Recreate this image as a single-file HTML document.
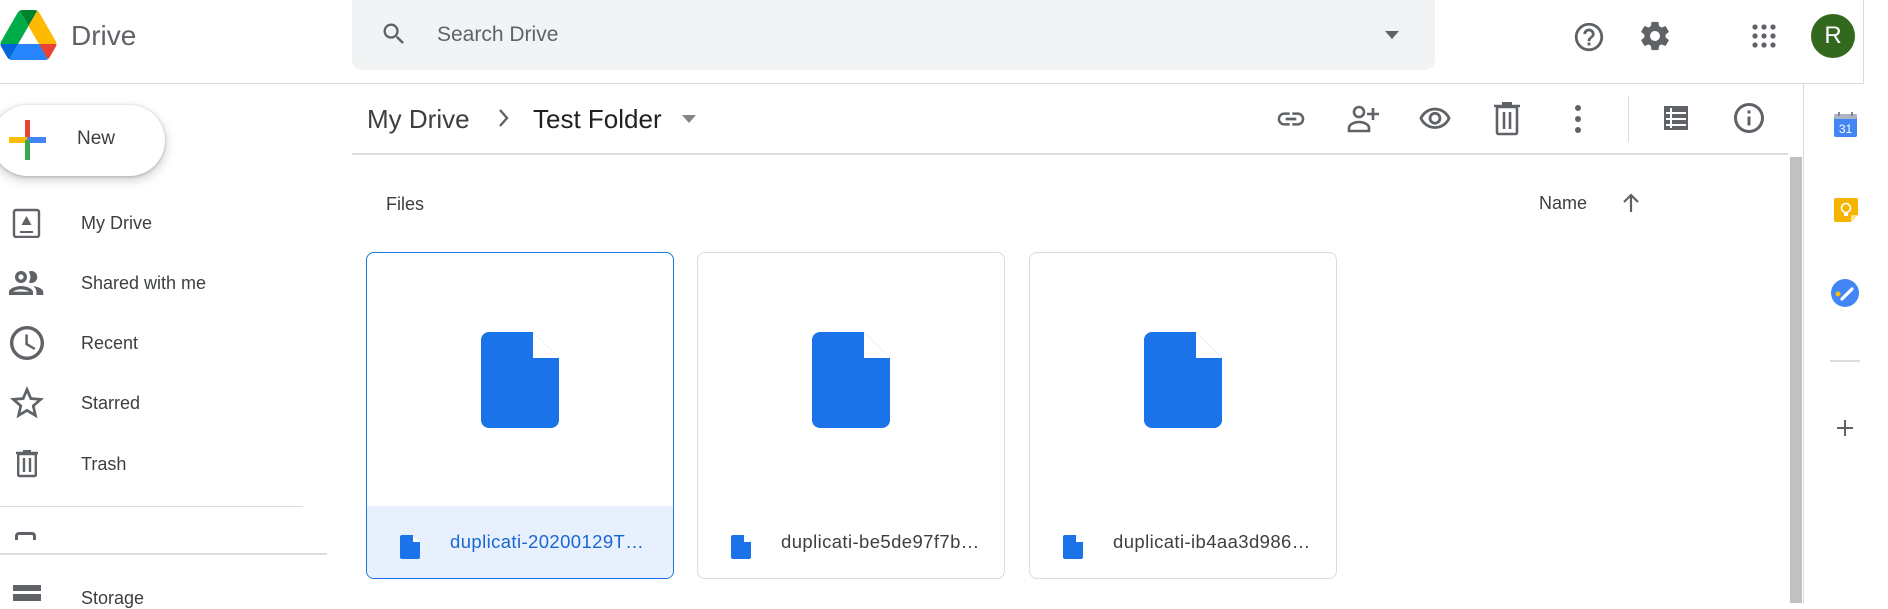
<!DOCTYPE html>
<html><head><meta charset="utf-8"><style>
*{margin:0;padding:0;box-sizing:border-box}
body{width:1888px;height:603px;overflow:hidden;background:#fff;font-family:"Liberation Sans",Arial,sans-serif;color:#3c4043;position:relative}
.a{position:absolute}
.nav{position:absolute;left:0;width:300px;height:40px;display:flex;align-items:center}
.nav svg{position:absolute;left:12px}
.nav span{position:absolute;left:81px;font-size:18px;color:#3c4043}
.card{position:absolute;top:252px;width:308px;height:327px;border:1px solid #dadce0;border-radius:8px;overflow:hidden;background:#fff}
.card .big{position:absolute;left:50%;top:79px;margin-left:-39px}
.card .lab{position:absolute;left:0;right:0;bottom:0;height:72px}
.card .lab svg{position:absolute;left:33px;top:29px}
.card .lab span{position:absolute;left:83px;top:25px;font-size:18.5px;white-space:nowrap;color:#3c4043;letter-spacing:0.4px}
.ic{position:absolute}
</style></head><body>
<!-- header -->
<svg class="a" style="left:0;top:10px" width="57" height="50" viewBox="0 0 87.3 78"><path d="M6.6 66.85l3.85 6.65c.8 1.4 1.95 2.5 3.3 3.3L27.5 53H0c0 1.550.4 3.1 1.2 4.5z" fill="#0066da"/><path d="M43.65 25L29.9 1.2c-1.35.8-2.5 1.9-3.3 3.3L1.2 48.5C.4 49.9 0 51.45 0 53h27.5z" fill="#00ac47"/><path d="M73.55 76.8c1.35-.8 2.5-1.9 3.3-3.3l1.6-2.750 7.65-13.25c.8-1.4 1.2-2.95 1.2-4.5H59.8l5.85 11.5z" fill="#ea4335"/><path d="M43.65 25L57.4 1.2C56.05.4 54.5 0 52.9 0H34.4c-1.6 0-3.150.45-4.5 1.2z" fill="#00832d"/><path d="M59.8 53H27.5L13.75 76.8c1.35.8 2.9 1.2 4.5 1.2h50.8c1.6 0 3.15-.45 4.5-1.2z" fill="#2684fc"/><path d="M73.4 26.5L60.7 4.5c-.8-1.4-1.95-2.5-3.3-3.3L43.65 25 59.8 53h27.45c0-1.55-.4-3.1-1.2-4.5z" fill="#ffba00"/></svg>
<div class="a" style="left:71px;top:20px;font-size:28px;color:#5f6368">Drive</div>
<div class="a" style="left:352px;top:0;width:1083px;height:70px;background:#f1f3f4;border-radius:0 0 10px 10px"></div>
<svg class="a" style="left:380px;top:20px" width="28" height="28" viewBox="0 0 24 24"><path fill="#5f6368" d="M15.5 14h-.79l-.28-.27A6.47 6.47 0 0016 9.5 6.5 6.5 0 109.5 16c1.61 0 3.09-.59 4.230-1.57l.27.28v.79l5 4.99L20.49 19l-4.99-5zm-6 0C7.01 14 5 11.99 5 9.5S7.01 5 9.5 5 14 7.01 14 9.5 11.99 14 9.5 14z"/></svg>
<div class="a" style="left:437px;top:23px;font-size:21px;color:#5f6368">Search Drive</div>
<svg class="a" style="left:1384px;top:30px" width="16" height="10"><path d="M1 1h14L8 9z" fill="#5f6368"/></svg>
<svg class="a" style="left:1572px;top:20px" width="34" height="34" viewBox="0 0 24 24"><path fill="#5f6368" d="M11 18h2v-2h-2v2zm1-16C6.48 2 2 6.48 2 12s4.48 10 10 10 10-4.48 10-10S17.52 2 12 2zm0 18c-4.41 0-8-3.59-8-8s3.59-8 8-8 8 3.59 8 8-3.59 8-8 8zm0-14c-2.21 0-4 1.79-4 4h2c0-1.1.9-2 2-2s2 .9 2 2c0 2-3 1.75-3 5h2c0-2.25 3-2.5 3-5 0-2.21-1.79-4-4-4z"/></svg>
<svg class="a" style="left:1638px;top:19px" width="34" height="34" viewBox="0 0 24 24"><path fill="#5f6368" d="M19.43 12.98c.04-.32.07-.64.07-.98s-.03-.66-.07-.98l2.11-1.65c.19-.15.24-.42.12-.64l-2-3.46c-.12-.22-.39-.3-.61-.22l-2.49 1c-.52-.4-1.08-.73-1.69-.98l-.38-2.65A.49.49 0 0014 2h-4c-.25 0-.46.18-.49.42l-.38 2.65c-.61.25-1.17.59-1.69.98l-2.49-1a.5.5 0 00-.61.22l-2 3.46c-.13.22-.07.49.12.64l2.11 1.65c-.04.32-.07.65-.07.98s.03.66.07.98l-2.11 1.65c-.19.15-.24.42-.12.64l2 3.46c.12.22.39.3.61.22l2.49-1c.52.4 1.08.73 1.69.98l.38 2.65c.03.24.24.42.49.42h4c.25 0 .46-.18.49-.42l.38-2.65c.61-.25 1.17-.59 1.69-.98l2.49 1c.23.09.49 0 .61-.22l2-3.46c.12-.22.07-.49-.12-.64l-2.11-1.65zM12 15.5c-1.93 0-3.5-1.57-3.5-3.5s1.57-3.5 3.5-3.5 3.5 1.57 3.5 3.5-1.57 3.5-3.5 3.5z"/></svg>
<svg class="a" style="left:1750px;top:22px" width="28" height="28" viewBox="0 0 28 28" fill="#5f6368"><circle cx="5" cy="5" r="2.6"/><circle cx="14" cy="5" r="2.6"/><circle cx="23" cy="5" r="2.6"/><circle cx="5" cy="14" r="2.6"/><circle cx="14" cy="14" r="2.6"/><circle cx="23" cy="14" r="2.6"/><circle cx="5" cy="23" r="2.6"/><circle cx="14" cy="23" r="2.6"/><circle cx="23" cy="23" r="2.6"/></svg>
<div class="a" style="left:1811px;top:14px;width:44px;height:44px;border-radius:50%;background:#33691e;color:#fff;font-size:24px;text-align:center;line-height:44px">R</div>
<div class="a" style="left:0;top:83px;width:1863px;height:1px;background:#dadce0"></div>
<div class="a" style="left:1863px;top:0;width:1px;height:84px;background:#dadce0"></div>
<!-- side panel -->
<div class="a" style="left:1803px;top:84px;width:1px;height:519px;background:#dadce0"></div>
<svg class="a" style="left:1833px;top:112px" width="25" height="26" viewBox="0 0 25 26"><rect x="1" y="2" width="23" height="23" rx="2" fill="#4285f4"/><rect x="1" y="2" width="23" height="5" rx="1.5" fill="#aab4c3"/><rect x="5" y="0" width="2" height="4" fill="#888"/><rect x="18" y="0" width="2" height="4" fill="#888"/><text x="12.5" y="21" font-size="12" fill="#fff" text-anchor="middle" font-family="Liberation Sans">31</text></svg>
<svg class="a" style="left:1834px;top:198px" width="24" height="24" viewBox="0 0 24 24"><path d="M2 0h20a2 2 0 012 2v15l-7 7H2a2 2 0 01-2-2V2a2 2 0 012-2z" fill="#f4b400"/><path d="M17 24v-5a2 2 0 012-2h5z" fill="#fde293"/><circle cx="12" cy="10" r="4.5" fill="none" stroke="#fff" stroke-width="1.6"/><rect x="10" y="14" width="4" height="4" fill="#fff"/></svg>
<svg class="a" style="left:1831px;top:279px" width="28" height="28" viewBox="0 0 28 28"><circle cx="14" cy="14" r="14" fill="#4285f4"/><circle cx="7" cy="15" r="2.5" fill="#fbbc04"/><path d="M11 20l10-10" stroke="#fff" stroke-width="3.2" stroke-linecap="round"/></svg>
<div class="a" style="left:1830px;top:360px;width:30px;height:2px;background:#dadce0"></div>
<svg class="a" style="left:1836px;top:419px" width="18" height="18"><path d="M9 1v16M1 9h16" stroke="#5f6368" stroke-width="2"/></svg>
<!-- New button -->
<div class="a" style="left:-8px;top:105px;width:173px;height:71px;border-radius:36px;background:#fff;box-shadow:0 1px 3px rgba(60,64,67,.35),0 4px 8px 3px rgba(60,64,67,.15)"></div>
<svg class="a" style="left:9px;top:120px" width="37" height="40" viewBox="0 0 37 40"><rect x="16" y="0" width="5" height="20" fill="#ea4335"/><rect x="0" y="17" width="18" height="6" fill="#fbbc04"/><rect x="18" y="17" width="19" height="6" fill="#4285f4"/><rect x="16" y="20" width="5" height="20" fill="#34a853"/></svg>
<div class="a" style="left:77px;top:128px;font-size:19px;color:#3c4043">New</div>
<!-- nav -->
<div class="nav" style="top:203px"><svg width="30" height="30" viewBox="0 0 30 30"><rect x="2" y="2" width="25" height="27" rx="2" fill="none" stroke="#5f6368" stroke-width="2.4"/><path d="M8 24h13" stroke="#5f6368" stroke-width="2"/><path d="M14.5 8l5 9h-10z" fill="#5f6368"/></svg><span>My Drive</span></div>
<div class="nav" style="top:263px"><svg width="36" height="36" viewBox="2 3 21 18" style="left:9px"><path fill="#5f6368" d="M9 13.75c-2.34 0-7 1.17-7 3.5V19h14v-1.75c0-2.33-4.66-3.5-7-3.5zM4.34 17c.84-.58 2.870-1.25 4.660-1.25s3.82.67 4.66 1.25H4.34zM9 12c1.93 0 3.5-1.57 3.5-3.5S10.93 5 9 5 5.5 6.57 5.5 8.5 7.07 12 9 12zm0-5c.83 0 1.5.67 1.5 1.5S9.83 10 9 10s-1.5-.67-1.5-1.5S8.17 7 9 7zm7.04 6.81c1.16.84 1.96 1.96 1.96 3.44V19h4v-1.75c0-2.02-3.5-3.17-5.96-3.44zM15 12c1.93 0 3.5-1.57 3.5-3.5S16.93 5 15 5c-.54 0-1.04.13-1.5.35.63.89 1 1.98 1 3.15s-.37 2.26-1 3.15c.46.22.96.35 1.5.35z"/></svg><span>Shared with me</span></div>
<div class="nav" style="top:323px"><svg width="34" height="34" viewBox="2 2 20 20" style="left:10px"><path fill="#5f6368" d="M11.99 2C6.47 2 2 6.48 2 12s4.47 10 9.99 10C17.52 22 22 17.52 22 12S17.52 2 11.99 2zM12 20c-4.42 0-8-3.58-8-8s3.58-8 8-8 8 3.58 8 8-3.58 8-8 8zm.5-13H11v6l5.25 3.15.75-1.23-4.5-2.67z"/></svg><span>Recent</span></div>
<div class="nav" style="top:383px"><svg width="34" height="34" viewBox="2 2 20 20" style="left:10px"><path fill="#5f6368" d="M22 9.24l-7.19-.62L12 2 9.19 8.63 2 9.24l5.46 4.73L5.82 21 12 17.27 18.18 21l-1.63-7.03L22 9.24zM12 15.4l-3.76 2.27 1-4.28-3.32-2.88 4.38-.38L12 6.1l1.71 4.04 4.38.38-3.32 2.88 1 4.28L12 15.4z"/></svg><span>Starred</span></div>
<div class="nav" style="top:444px"><svg width="30" height="30" viewBox="0 0 30 30"><path d="M4 4h22" stroke="#5f6368" stroke-width="2.4"/><rect x="11" y="1" width="8" height="3" fill="#5f6368"/><rect x="6.2" y="5" width="17.6" height="22" rx="1" fill="none" stroke="#5f6368" stroke-width="2.4"/><path d="M12 9v14M18 9v14" stroke="#5f6368" stroke-width="2.4"/></svg><span>Trash</span></div>
<div class="a" style="left:0;top:506px;width:303px;height:1px;background:#dadce0"></div>
<div class="a" style="left:15px;top:532px;width:21px;height:8px;border:3px solid #5f6368;border-bottom:none;border-radius:4px 4px 0 0"></div>
<div class="a" style="left:0;top:553px;width:327px;height:2px;background:#dadce0"></div>
<div class="a" style="left:13px;top:585px;width:28px;height:6px;background:#5f6368"></div>
<div class="a" style="left:13px;top:594px;width:28px;height:7px;background:#5f6368"></div>
<div class="a" style="left:81px;top:588px;font-size:18px;color:#3c4043">Storage</div>
<!-- breadcrumb -->
<div class="a" style="left:367px;top:104px;font-size:26px;color:#3c4043">My Drive</div>
<svg class="a" style="left:497px;top:108px" width="14" height="20"><path d="M3 2l7 8-7 8" stroke="#5f6368" stroke-width="2.4" fill="none"/></svg>
<div class="a" style="left:533px;top:104px;font-size:26px;color:#202124">Test Folder</div>
<svg class="a" style="left:681px;top:114px" width="16" height="10"><path d="M1 1h14L8 9z" fill="#80868b"/></svg>
<div class="a" style="left:352px;top:153px;width:1436px;height:2px;background:#dadce0"></div>
<!-- toolbar -->
<svg class="ic" style="left:1275px;top:103px" width="32" height="32" viewBox="0 0 24 24"><path fill="#5f6368" d="M3.9 12c0-1.71 1.39-3.1 3.1-3.1h4V7H7c-2.76 0-5 2.24-5 5s2.24 5 5 5h4v-1.9H7c-1.71 0-3.1-1.39-3.1-3.1zM8 13h8v-2H8v2zm9-6h-4v1.9h4c1.71 0 3.1 1.39 3.1 3.1s-1.39 3.1-3.1 3.1h-4V17h4c2.76 0 5-2.24 5-5s-2.24-5-5-5z"/></svg>
<svg class="ic" style="left:1346px;top:102px" width="34" height="34" viewBox="0 0 34 34"><circle cx="13" cy="10" r="5" fill="none" stroke="#5f6368" stroke-width="2.6"/><path d="M3 29v-3c0-4 6-6 10-6s10 2 10 6v3z" fill="none" stroke="#5f6368" stroke-width="2.6"/><path d="M27 6v12M21 12h12" stroke="#5f6368" stroke-width="2.6"/></svg>
<svg class="ic" style="left:1418px;top:102px" width="34" height="34" viewBox="0 0 24 24"><path fill="#5f6368" d="M12 6a9.77 9.77 0 018.82 5.5A9.77 9.77 0 0112 17a9.77 9.77 0 01-8.82-5.5A9.77 9.77 0 0112 6m0-2C7 4 2.73 7.11 1 11.5 2.73 15.89 7 19 12 19s9.27-3.11 11-7.5C21.27 7.11 17 4 12 4zm0 5a2.5 2.5 0 010 5 2.5 2.5 0 010-5m0-2c-2.48 0-4.5 2.02-4.5 4.5S9.52 16 12 16s4.5-2.02 4.5-4.5S14.48 7 12 7z"/></svg>
<svg class="ic" style="left:1493px;top:102px" width="28" height="34" viewBox="0 0 28 34"><path d="M1 4h26" stroke="#5f6368" stroke-width="2.6"/><rect x="9" y="0" width="10" height="4" fill="#5f6368"/><rect x="4" y="5" width="20" height="27" rx="1.5" fill="none" stroke="#5f6368" stroke-width="2.6"/><path d="M11 10v17M17 10v17" stroke="#5f6368" stroke-width="2.6"/></svg>
<svg class="ic" style="left:1571px;top:103px" width="14" height="32" viewBox="0 0 14 32" fill="#5f6368"><circle cx="7" cy="5" r="3"/><circle cx="7" cy="16" r="3"/><circle cx="7" cy="27" r="3"/></svg>
<div class="a" style="left:1628px;top:96px;width:1px;height:46px;background:#dadce0"></div>
<svg class="ic" style="left:1662px;top:104px" width="28" height="28" viewBox="0 0 28 28"><rect x="2" y="2" width="24" height="24" fill="#5f6368"/><path d="M4 9h20M4 15h20M4 21h20M9 4v20" stroke="#fff" stroke-width="2"/></svg>
<svg class="ic" style="left:1731px;top:100px" width="36" height="36" viewBox="0 0 24 24"><path fill="#5f6368" d="M11 7h2v2h-2zm0 4h2v6h-2zm1-9C6.48 2 2 6.48 2 12s4.48 10 10 10 10-4.48 10-10S17.52 2 12 2zm0 18c-4.41 0-8-3.59-8-8s3.59-8 8-8 8 3.59 8 8-3.59 8-8 8z"/></svg>
<!-- scrollbar -->
<div class="a" style="left:1790px;top:157px;width:12px;height:446px;background:#c1c1c1"></div>
<!-- files header -->
<div class="a" style="left:386px;top:194px;font-size:18px;color:#3c4043">Files</div>
<div class="a" style="left:1539px;top:193px;font-size:18px;color:#3c4043">Name</div>
<svg class="a" style="left:1621px;top:192px" width="20" height="22"><path d="M10 20V3M3 10l7-7 7 7" stroke="#5f6368" stroke-width="2.2" fill="none"/></svg>
<!-- cards -->
<div class="card" style="left:366px;border:1.5px solid #1a73e8">
 <svg class="big" width="78" height="96" viewBox="0 0 78 96"><path d="M8 0h44l26 26v62a8 8 0 01-8 8H8a8 8 0 01-8-8V8a8 8 0 018-8z" fill="#1a73e8"/><path d="M52 0v26h26z" fill="#fff"/></svg>
 <div class="lab" style="background:#e8f0fe"><svg width="20" height="24" viewBox="0 0 20 24"><path d="M2 0h11l7 7v15a2 2 0 01-2 2H2a2 2 0 01-2-2V2a2 2 0 012-2z" fill="#1a73e8"/><path d="M13 0v7h7z" fill="#fff"/></svg><span style="color:#1967d2">duplicati-20200129T…</span></div>
</div>
<div class="card" style="left:697px">
 <svg class="big" width="78" height="96" viewBox="0 0 78 96"><path d="M8 0h44l26 26v62a8 8 0 01-8 8H8a8 8 0 01-8-8V8a8 8 0 018-8z" fill="#1a73e8"/><path d="M52 0v26h26z" fill="#fff"/></svg>
 <div class="lab"><svg width="20" height="24" viewBox="0 0 20 24"><path d="M2 0h11l7 7v15a2 2 0 01-2 2H2a2 2 0 01-2-2V2a2 2 0 012-2z" fill="#1a73e8"/><path d="M13 0v7h7z" fill="#fff"/></svg><span>duplicati-be5de97f7b…</span></div>
</div>
<div class="card" style="left:1029px">
 <svg class="big" width="78" height="96" viewBox="0 0 78 96"><path d="M8 0h44l26 26v62a8 8 0 01-8 8H8a8 8 0 01-8-8V8a8 8 0 018-8z" fill="#1a73e8"/><path d="M52 0v26h26z" fill="#fff"/></svg>
 <div class="lab"><svg width="20" height="24" viewBox="0 0 20 24"><path d="M2 0h11l7 7v15a2 2 0 01-2 2H2a2 2 0 01-2-2V2a2 2 0 012-2z" fill="#1a73e8"/><path d="M13 0v7h7z" fill="#fff"/></svg><span>duplicati-ib4aa3d986…</span></div>
</div>
</body></html>
